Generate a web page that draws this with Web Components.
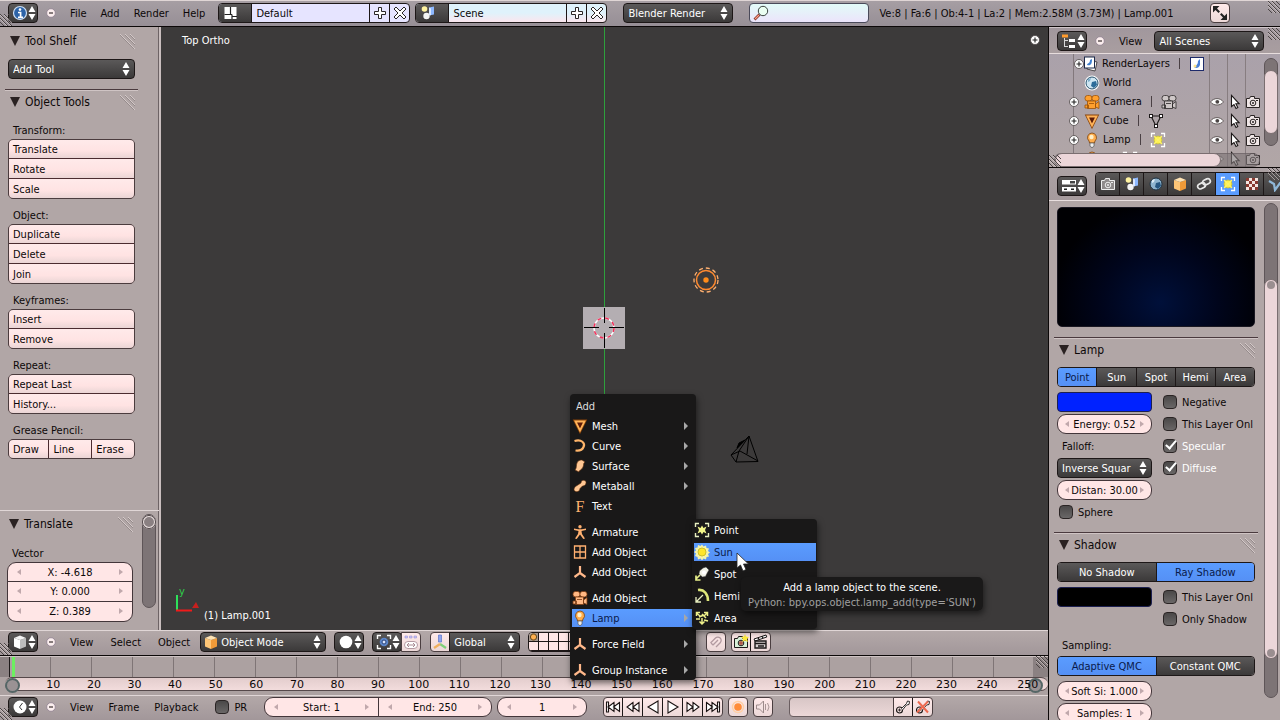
<!DOCTYPE html>
<html lang="en">
<head>
<meta charset="utf-8">
<title>Blender</title>
<style>
html,body{margin:0;height:100%}
body{background:#3b3939;overflow:hidden;font:11px/14px "DejaVu Sans Condensed","Noto Sans",sans-serif;color:#0c0808;
--panel:#b1a6a6;--head:#aba0a0;--pink:#ffe6e6;--dark:linear-gradient(#5b5959,#3b3939);--blue:linear-gradient(#5a9cff,#5590f5);--line:#1d1717}
blender-app{height:100vh}
</style>
</head>
<body>
<blender-app></blender-app>
<script>
const RESET = `*{box-sizing:border-box}
button,input,select{font:inherit;color:inherit;margin:0;padding:0;border:0;background:none;outline:0;border-radius:0;min-width:0}
:host([hidden]){display:none}`;

const define = (name, css, render) => customElements.define(name, class extends HTMLElement {
  connectedCallback() {
    if (this.shadowRoot) return;
    const a = (k, d = '') => this.getAttribute(k) ?? d;
    this.attachShadow({ mode: 'open' }).innerHTML = `<style>${RESET}${css}</style>${render(a, this)}`;
  }
});

const pink = 'fill="#ffc793" stroke="#5a2a08" stroke-width=".6"';
const corners = (c, w = 1.4) => `<path d="M1.5 5V1.5H5M11 1.5h3.500V5M14.500 11v3.500H11M5 14.500H1.500V11" fill="none" stroke="${c}" stroke-width="${w}"/>`;
const empty = c => `<path d="M8 2v7L2.500 13M8 9l5.500 4" fill="none" stroke="${c}" stroke-width="2.200"/>`;
const tri = (x, d) => d > 0 ? `M${x} 3.500l6 4.500-6 4.500z` : `M${x} 3.500l-6 4.500 6 4.500z`;
const play = p => `<path d="${p}" fill="#fff" stroke="#1a1212" stroke-width="1.100"/>`;
const cube = (a, b, c) => `<path d="M2 4l6 2v9l-6-2.500z" fill="${a}"/><path d="M8 6l6-2v8.500L8 15z" fill="${b}"/><path d="M2 4l6-2.500L14 4 8 6z" fill="${c}"/>`;
const movie = (f, s) => `<g fill="${f}" stroke="${s}" stroke-width=".8"><rect x="1" y="1.500" width="7" height="5.500" rx="2.500"/><rect x="8" y="1.500" width="7" height="5.500" rx="2.500"/><path d="M3.500 7h8v7.500h-8zM11.500 10l3.500-2.500v7L11.500 13zM1 11h3.500v3H1z"/></g><path d="M5 9.500h5" stroke="${s}" stroke-width=".8"/>`;
const photo = (f, s) => `<path d="M1.500 4.500h3l1-2h4v2h5v9h-13z" fill="${f}" stroke="${s}"/><circle cx="8" cy="9" r="2.800" fill="none" stroke="${s}"/><circle cx="8" cy="9" r="1" fill="${s}"/><path d="M11 6.500h2" stroke="${s}"/>`;
const ICONS = {
  info: `<circle cx="8" cy="8" r="6.500" fill="#2c63a8" stroke="#cfe0f5" stroke-width="1.200"/><circle cx="8" cy="4.600" r="1.300" fill="#fff"/><path d="M6 7.500h2.600v4.500M6 12.300h5" stroke="#fff" stroke-width="1.700" fill="none"/>`,
  split: `<path d="M1.500 2h12v12h-12z" fill="#fff"/><path d="M7.500 2v7.500M1.500 9.500H9M9 9.500v4.500M9 11.500h5" stroke="#222" stroke-width="1.200" fill="none"/>`,
  scene: `<circle cx="4.500" cy="4" r="2.800" fill="#fff3a0"/><path d="M9 2.500l5-1v8l-5 1z" fill="#8db8ff"/><path d="M9 2.500l2 1v7l-2-1z" fill="#dbe8ff"/><circle cx="6.500" cy="11" r="3.200" fill="#f4f4f4"/>`,
  plus: `<path d="M6.500 2.500h3v4h4v3h-4v4h-3v-4h-4v-3h4z" fill="#fff" stroke="#2a2626"/>`,
  cross: `<path d="M4 2l4 4 4-4 2 2-4 4 4 4-2 2-4-4-4 4-2-2 4-4-4-4z" fill="#fff" stroke="#2a2626"/>`,
  search: `<path d="M1.500 14.500l5-5" stroke="#7a2c20" stroke-width="2.600"/><path d="M2 14l4-4" stroke="#ff9d86" stroke-width="1.200"/><circle cx="10" cy="6" r="4.700" fill="#eafff2" stroke="#3a4440"/>`,
  full: `<path d="M1 1h6.500L5 3.500l3 3L6.500 8l-3-3L1 7.500z" fill="#222"/><path d="M15 15H8.500l2.500-2.500-3-3L9.500 8l3 3L15 8.500z" fill="#222"/>`,
  outliner: `<path d="M1 1.500h6v3H1z" fill="#ff9c2e"/><path d="M3.500 5v9M3.500 7.500H7M3.500 13.500H7" stroke="#d9d9d9" fill="none"/><path d="M8 6h6v3H8zM8 12h6v3H8z" fill="#fff"/>`,
  props: `<path d="M1 2h14v4.500H1zM1 9h14v4.500H1z" fill="#fff"/><path d="M9 3h5v2.500H9z" fill="#444"/><path d="M3 11.200h3M10 11.200h3" stroke="#222" stroke-width="1.600"/>`,
  layers: `<path d="M5 4l9 2-2 9-8-2z" fill="#fff" stroke="#2a2626" stroke-width=".8"/><rect x="1.500" y="1" width="10" height="11" fill="#fff" stroke="#1d2a4a"/><path d="M4 9c0-2 3-1 3-5l2-1c0 5-1 7-5 6z" fill="#3f7fd0"/>`,
  layer: `<rect x="1.500" y="1.500" width="13" height="13" fill="#fff" stroke="#1d2a6a"/><path d="M5 11c1-2 4-1 4-6l2-2v6c-1 3-4 4-6 2z" fill="#4a80d8"/><circle cx="6" cy="10" r="1.500" fill="#ffe48a"/>`,
  world: `<circle cx="8" cy="8" r="7.400" fill="#fff"/><circle cx="8" cy="8" r="6" fill="#cfe6f2" stroke="#27506c"/><path d="M8 7l4-1 1 4-3 3-3-2z" fill="#2d6c99"/><path d="M4 4l3-1-1 3-2 1z" fill="#7fb0cc"/>`,
  worldd: `<circle cx="8" cy="8" r="6" fill="#8fb4ce" stroke="#1d3040"/><path d="M8 7l4-1 1 4-3 3-3-2z" fill="#265680"/><path d="M4 4l3-1-1 3-2 1z" fill="#dcebf5"/>`,
  cam: movie('#ffa02e', '#9a5008'), camdata: movie('#cfc8c8', '#2a2626'), movie: movie('#ffb884', '#7a3a10'),
  mesh: `<path d="M3 3h10L8 13z" fill="none" stroke="#8a4308" stroke-width="2.800"/><path d="M3.500 3.500h9L8 12.500z" fill="#5a1a08" stroke="#ffb45a" stroke-width="1.800"/>`,
  meshdata: `<path d="M3 3h10L8 13z" fill="none" stroke="#1d1919" stroke-width="1.100"/><g fill="#fff" stroke="#1d1919"><rect x="1.500" y="1.500" width="3" height="3"/><rect x="11.500" y="1.500" width="3" height="3"/><rect x="6.500" y="11.500" width="3" height="3"/></g>`,
  bulb: `<path d="M8 1a4.600 4.600 0 0 1 3 8l-.6 2H5.600L5 9a4.600 4.600 0 0 1 3-8z" fill="#ffae4e" stroke="#7a4310" stroke-width=".8"/><circle cx="7.500" cy="5" r="2.200" fill="#fff0c8"/><path d="M6 11h4v3l-1 1.300H7L6 14z" fill="#eee" stroke="#555" stroke-width=".7"/>`,
  lampdata: corners('#fff', 1.300) + `<circle cx="8" cy="8" r="4" fill="#fff04a" stroke="#c9c24a"/><path d="M4 4l8 8M12 4l-8 8" stroke="#fdf26a" stroke-width="1.200"/>`,
  eye: `<path d="M1.500 8c3-4.500 10-4.500 13 0-3 4-10 4-13 0z" fill="#fff" stroke="#5a5252" stroke-width=".9"/><circle cx="8.300" cy="7.800" r="1.900" fill="#4a4444"/>`,
  cursor: `<path d="M4.500 1.500v11l2.500-2 2 4 1.800-1-1.900-3.700h3.300z" fill="#fff" stroke="#1d1919" stroke-width="1.100"/>`,
  photo: photo('#efe6e6', '#2a2424'), photod: photo('#8f8b8b', '#eee'),
  cube: cube('#ffc677', '#f09a38', '#ffe3b4'), cubew: cube('#fff', '#bdbdbd', '#f4f4f4'),
  link: `<g fill="none" stroke="#e8e8e8" stroke-width="1.700"><rect x="1.500" y="7.500" width="8" height="5" rx="2.500" transform="rotate(-25 5 10)"/><rect x="6.500" y="3.500" width="8" height="5" rx="2.500" transform="rotate(-25 10 6)"/></g>`,
  checker: `<rect x="2" y="2" width="12" height="12" fill="#f5e6e2"/><path d="M2 2h3v3H2zM8 2h3v3H8zM5 5h3v3H5zM11 5h3v3h-3zM2 8h3v3H2zM8 8h3v3H8zM5 11h3v3H5zM11 11h3v3h-3z" fill="#8a3a30"/>`,
  physics: `<path d="M1 5l5 3 1 6 5-7 4-3" fill="none" stroke="#8fb8d8" stroke-width="2.200"/>`,
  sphere: `<circle cx="8" cy="8" r="6.300" fill="#fff"/>`,
  pivot: corners('#fff') + `<circle cx="8" cy="8" r="4.300" fill="#5c86c9"/><circle cx="8" cy="8" r="2" fill="#dbe7ff" stroke="#27427a"/>`,
  manip: `<path d="M2 2h2.500v2H2zM6.500 2H9v2H6.500zM11 2h2.500v2H11z" fill="#c9c4f5" stroke="#9a94d8" stroke-width=".6"/><rect x="1.500" y="7.500" width="13" height="7" rx="3.500" fill="#fff" stroke="#b59aa2"/><path d="M4 11h8M6 9l-2 2 2 2M10 9l2 2-2 2" stroke="#a88a92" fill="none"/>`,
  axis: `<path d="M6.500 1h3v7h-3z" fill="#8fa6f0" stroke="#5a72c8" stroke-width=".7"/><path d="M8 10l6 4" stroke="#7fd07a" stroke-width="2.200"/><path d="M8 10l-6 4" stroke="#f0b060" stroke-width="2.200"/>`,
  magnet: `<path d="M2.500 9l5-5a3.300 3.300 0 0 1 4.700 4.700L8 13M5 11l5-5M3 9l2 2" fill="none" stroke="#b29aa0" stroke-width="1.300"/>`,
  shot: photo('#d8f0d8', '#1d1919') + `<circle cx="8" cy="9" r="2" fill="#b05a4a"/><path d="M12 0l1 2.500 3 .5-2 2 1 3-3-1.500L9.500 8l.5-3-2-2 3-.5z" fill="#ffec40"/>`,
  clap: `<path d="M1 5l12-4 .8 2L2 7z" fill="#fff" stroke="#1d1919"/><path d="M2 7h11v7H2z" fill="#d8d0d0" stroke="#1d1919" stroke-width="1.400"/><path d="M2 9.500h11M5 3.800l1 1.500M9 2.400l1 1.500M5 12h6" stroke="#1d1919" stroke-width="1.300"/>`,
  clock: `<circle cx="8" cy="8" r="6.500" fill="#fff"/><path d="M10.500 4L7.500 8l2.500 3" fill="none" stroke="#333"/>`,
  first: play('M1.500 3h2v10h-2z' + tri(9, -1) + tri(14.500, -1)), prev: play(tri(8, -1) + tri(14, -1)),
  back: play('M13 2L3 8l10 6z'), fwd: play('M3 2l10 6-10 6z'),
  next: play(tri(2, 1) + tri(8, 1)), last: play(tri(1.500, 1) + tri(7, 1) + 'M12.500 3h2v10h-2z'),
  rec: `<circle cx="8" cy="8" r="5.500" fill="none" stroke="#ffcfa5" stroke-width="1.400"/><circle cx="8" cy="8" r="3.800" fill="#ff8c3a"/>`,
  sound: `<path d="M1.500 6h3l4-4v12l-4-4h-3z" fill="#f5e3e3" stroke="#9c8a8a"/><path d="M10.500 5v6M12.500 4q3 4 0 8" stroke="#a89696" fill="none"/>`,
  key: `<circle cx="4.500" cy="11" r="3" fill="none" stroke="#1d1919" stroke-width="1.200"/><path d="M4.500 9.500v3M3 11h3" stroke="#1d1919" stroke-width=".8"/><path d="M6.500 9.500l5-5 1-2.500 2 .5-.5 3-2.500.5-4 5" fill="#fff" stroke="#1d1919" stroke-width=".9"/>`,
  minus: `<circle cx="8" cy="8" r="4.300" fill="#fbeeee" stroke="#8f8090" stroke-width=".8"/><path d="M6 8h4" stroke="#3a3030" stroke-width="1.200"/>`,
  expand: `<circle cx="8" cy="8" r="4.500" fill="#fff" stroke="#4a4444" stroke-width=".8"/><path d="M5.500 8h5M8 5.500v5" stroke="#222" stroke-width="1.100"/>`,
  curve: `<path d="M2.500 3c7-2 11 2 9 6-1 2.500-4 4-8 3.500" fill="none" stroke="#ffb56a" stroke-width="2.200"/>`,
  surf: `<path d="M5 5c1-3 4-3 5-3l3 2c-2 1-1 3-2 5-1 3-4 3-4 5l-4-2c2-2 1-5 2-7z" ${pink}/>`,
  meta: `<path d="M3.500 8.500L9 5c0-4 6-3 5 0 0 2-2 3-3.500 3L8 10.500c0 4-6 4-6 1 0-1 .5-2 1.500-3z" ${pink}/>`,
  text: `<text x="8" y="13.500" text-anchor="middle" font-family="Liberation Serif" font-size="16" fill="#ffb070">F</text>`,
  arm: `<circle cx="8" cy="2.800" r="1.700" fill="#ffb070"/><path d="M2 4.500c3 1 9 1 12 0v1.500l-4.500 1 .5 3 3 4.500-1.700.5L8 10.500l-3.300 4.500-1.700-.5 3-4.500.5-3L2 6z" fill="#ffb070"/>`,
  lattice: `<path d="M2.500 2h11v12h-11zM8 2v12M2.500 8h11" fill="none" stroke="#ffb070" stroke-width="1.300"/>`,
  empty: empty('#ffb88a'),
  point: corners('#e8efc0') + `<path d="M8 3.500l1.500 2.500 3-1.500L11 8l1.500 3.500-3-1.500L8 12.500 6.500 10l-3 1.500L5 8 3.500 4.500l3 1.500z" fill="#f4f78a"/>`,
  sun: `<path d="M8 .5l1.500 2 2.500-1 .5 2.500 2.500.5-1 2.500 2 1.500-2 1.500 1 2.500-2.500.5-.5 2.500-2.500-1-1.500 2-1.500-2-2.500 1-.5-2.500L1 12l1-2.500L0 8l2-1.500L1 4l2.500-.5L4 1l2.500 1z" fill="#f5f3a8"/><circle cx="8" cy="8" r="4" fill="#ffe62a" stroke="#cdbf2a"/>`,
  spot: `<path d="M9 2l3-1 3 3-1.500 2.500-2 4-3 .5-3.500-3 .5-3z" fill="#f0f0e6" stroke="#333" stroke-width=".5"/><circle cx="10" cy="6.500" r="2" fill="#fff"/><path d="M6 9l-4 4M2 9.500v4.500h4.500" stroke="#e8ef8a" fill="none" stroke-width="1.700"/>`,
  hemi: `<path d="M4 2c6-1 10 4 10 11" fill="none" stroke="#dfe87a" stroke-width="2.600"/><path d="M9 7l-6.500 6.500M2 9v5h5" fill="none" stroke="#e8efc0" stroke-width="1.300"/>`,
  area: `<path d="M8 4l4 4M6 6L2.500 3M2.500 6V2.500H6M10 6l3-3M10 2.500h3.500V6M8 8v6M5.500 11.500L8 14l2.500-2.500M2 9h4M10 10l4 1M5 7l5-2" fill="none" stroke="#eef08a" stroke-width="1.500"/>`
};
ICONS.keydel = ICONS.key + '<path d="M3 2.500l10 11M13 2.500l-11 11" stroke="#ee6a50" stroke-width="2"/>';

define('bl-icon', `:host{display:block;width:16px;height:16px;flex:none}svg{display:block;width:100%;height:100%}`,
  a => `<svg viewBox="0 0 16 16" aria-hidden="true">${ICONS[a('name')] || ''}</svg>`);

define('bl-arrows', `:host{display:block;width:8px;height:14px;flex:none;pointer-events:none}svg{display:block}`,
  () => `<svg width="8" height="14"><path d="M4 0l3.500 6h-7zM4 14l3.500-6h-7z" fill="#fff"/></svg>`);

define('bl-grip', `:host{display:block;width:16px;height:16px;flex:none}svg{display:block}`,
  () => `<svg width="16" height="16"><path d="M1 1l15 15M6 1l10 10M11 1l5 5" stroke="#d3c8c8"/><path d="M1 2l14 14M6 2l10 10M11 2l5 5" stroke="#958b8b"/></svg>`);

define('bl-corner', `:host{display:block;position:absolute;width:12px;height:12px}:host([bottom]){left:0;bottom:0}:host(:not([bottom])){right:0;top:0}svg{display:block}`,
  () => `<svg width="12" height="12"><path d="M0 0l12 12M4 0l8 8M8 0l4 4M0 4l8 8M0 8l4 4" stroke="#4a4444"/><path d="M0 1l11 11M4 1l8 8M0 5l7 7" stroke="#ddd2d2" stroke-width=".6"/></svg>`);

define('bl-bar', `:host{display:flex;position:relative;flex:none;height:26px;padding:1px 8px 0;align-items:flex-start;background:linear-gradient(#b3a8a8,#a2979a);border-top:1px solid #e0d6d6;border-bottom:1px solid #0c0808}
:host([top]){height:27px;padding-top:2px;background:linear-gradient(#a69ea3,#978f96)}:host([last]){height:25px;border-bottom:0}:host([side]){height:27px;padding-top:3px;background:linear-gradient(#a1979d,#a99ea0);border-bottom-color:#e8dede;border-top-color:#d0c6ca}`,
  () => `<slot></slot>`);

define('bl-type', `:host{display:block;flex:none;width:30px;height:20px}
button{width:100%;height:100%;display:flex;align-items:center;justify-content:space-between;padding:0 3px;background:var(--dark);border:1px solid var(--line);border-radius:4px}`,
  a => `<button type="button" aria-label="${a('label')}"><bl-icon name="${a('icon')}"></bl-icon><bl-arrows></bl-arrows></button>`);

define('bl-menus', `:host{display:flex;height:20px;align-items:center;gap:15px}:host([tight]){gap:14px}:host([wide]){gap:17px}bl-icon{margin-left:5px;margin-right:-4px}:host([tight]) bl-icon{margin-right:-3px}:host([wide]) bl-icon{margin-right:-6px}button{height:20px;padding-top:2px}`,
  a => `<bl-icon name="minus"></bl-icon>` + a('items').split('|').map(t => t && `<button type="button">${t}</button>`).join(''));

define('bl-select', `:host{display:block;position:relative;height:20px;flex:none}
select{appearance:none;width:100%;height:100%;padding:1px 16px 0 4px;color:#fff;background:var(--dark);border:1px solid var(--line);border-radius:4px;text-overflow:clip}
:host([icon]) select{padding-left:20px}:host([joined]) select{border-radius:0 4px 4px 0}
bl-icon{position:absolute;left:3px;top:2px}bl-arrows{position:absolute;right:5px;top:3px}`,
  a => `<select aria-label="${a('label')}"><option>${a('value')}</option></select>${a('icon') ? `<bl-icon name="${a('icon')}"></bl-icon>` : ''}<bl-arrows></bl-arrows>`);

define('bl-datablock', `:host{display:flex;width:192px;height:20px;border:1px solid var(--line);border-radius:4px;overflow:hidden;background:#e6e4ff}
:host([icon=scene]){background:linear-gradient(#dff2fb 50%,#fbe6ee)}
button{width:20px;display:flex;align-items:center;justify-content:center;border-left:1px solid var(--line)}
.t{width:32px;border:0;background:var(--dark);justify-content:flex-start;padding-left:4px}
input{flex:1;padding:1px 4px 0;border-left:1px solid var(--line)}`,
  a => `<button class="t" type="button" aria-label="Browse"><bl-icon name="${a('icon')}"></bl-icon></button><input aria-label="${a('label')}" value="${a('value')}"><button type="button" aria-label="Add"><bl-icon name="plus"></bl-icon></button><button type="button" aria-label="Remove"><bl-icon name="cross"></bl-icon></button>`);

define('bl-iconrow', `:host{display:flex;height:20px;flex:none;border:1px solid #4a3e40;border-radius:4px;overflow:hidden;background:linear-gradient(#ffeaea,#ecd8d8)}
button{width:18px;display:flex;align-items:center;justify-content:center}button+button{width:20px;border-left:1px solid var(--line)}`,
  a => a('icons').split(' ').map(n => `<button type="button" aria-label="${n}"><bl-icon name="${n}"></bl-icon></button>`).join(''));

define('bl-title', `:host{display:flex;height:20px;align-items:center;font-size:12px;padding:0 0 0 2px}
:host([sep]){margin:10px -3px 0;padding:1px 3px 0 5px;height:23px;border-top:1px solid #4a3a3e;box-shadow:inset 0 1px #cfc4c4}
svg{margin-right:5px;flex:none}span{flex:1}`,
  () => `<svg width="10" height="10"><path d="M0 0h10L5 10z" fill="#2a2222"/></svg><span><slot></slot></span><bl-grip></bl-grip>`);

define('bl-label', `:host{display:block;height:25px;padding:8px 5px 0;line-height:17px}`, () => `<slot></slot>`);

define('bl-ops', `:host{display:flex;flex-direction:column;border:1px solid #4b3c3e;border-radius:5px;overflow:hidden;background:#4b2c30}
button{height:20px;padding:2px 4px 0;text-align:left;border-top:1px solid #4b2c30;background:linear-gradient(#ffeaea,#ffe3e3 60%,#ead5d5)}
button:first-of-type{height:18px;border-top:0}:host([row]){flex-direction:row}:host([row]) button{flex:40;height:18px;border:0}
:host([row]) button+button{border-left:1px solid #4b2c30;flex:43}`,
  a => a('items').split('|').map(t => `<button type="button">${t}</button>`).join(''));

define('bl-nums', `:host{display:flex;flex-direction:column;border:1px solid #43363a;border-radius:9px;overflow:hidden;background:var(--pink)}
label{display:flex;position:relative;height:20px;border-top:1px solid #43363a}label:first-of-type{height:18px;border:0}
input{flex:1;text-align:center;width:100%;padding-top:1px}svg{position:absolute;top:6px;left:9px}svg+svg{left:auto;right:9px;transform:scaleX(-1)}
:host([tight]) svg{left:7px}:host([tight]) svg+svg{left:auto;right:7px}
:host([row]){flex-direction:row}:host([row]) label{flex:1;height:18px}:host([row]) label+label{border:0;border-left:1px solid #43363a}`,
  a => a('values').split('|').map(v => `<label><input aria-label="${v.split(':')[0]}" value="${v}"><svg width="4" height="6"><path d="M4 0v6L0 3z" fill="#c0a8ac"/></svg><svg width="4" height="6"><path d="M4 0v6L0 3z" fill="#c0a8ac"/></svg></label>`).join(''));

define('bl-check', `:host{display:flex;height:20px;align-items:center;white-space:nowrap}
label{display:flex;align-items:center}span{padding-top:2px}input{appearance:none;position:relative;width:14px;height:14px;margin:0 5px 0 2px;flex:none;background:linear-gradient(#4a4848,#6a6767);border:1px solid #2a2424;border-radius:4px}
input:checked::after{content:"";position:absolute;left:4px;top:-2px;width:4px;height:9px;border:solid #fff;border-width:0 2px 2px 0;transform:rotate(40deg)}
:host([checked]){color:#fff}`,
  a => `<label><input type="checkbox" ${a('checked', null) !== null ? 'checked' : ''}><span><slot></slot></span></label>`);

define('bl-seg', `:host{display:flex;height:20px;border:1px solid var(--line);border-radius:4px;overflow:hidden}
button{flex:1;color:#fff;background:var(--dark);padding-top:2px}button+button{border-left:1px solid var(--line)}button[aria-pressed=true]{color:#0a1a4a;background:var(--blue)}`,
  a => a('items').split('|').map((t, i) => `<button type="button" aria-pressed="${i == a('on')}">${t}</button>`).join(''));

define('bl-swatch', `:host{display:block;height:20px}button{display:block;width:100%;height:20px;border:1px solid #1d2050;border-radius:4px;background:var(--c)}`,
  a => `<button type="button" aria-label="${a('label')}" style="--c:${a('color')}"></button>`);

define('bl-scroll', `:host{display:flex;flex-direction:column;width:14px;border-radius:7px;background:#7d7476;border:1px solid #5e5558}
i{display:block;border-radius:7px;background:#ecd6d9;border:1px solid #7a6e70;margin:0 -1px;flex:none;position:relative}
.k{height:14px;border:2px solid #efe4e4;outline:1px solid #4d4446;outline-offset:-1px;background:#8a8082}
:host([row]){flex-direction:row;width:auto;height:14px}:host([row]) i{margin:-1px 0}
:host([caps]) i::before,:host([caps]) i::after{content:"";position:absolute;left:2px;top:1px;width:8px;height:8px;border-radius:50%;background:#9a8e90}:host([caps]) i::after{top:auto;bottom:1px}`,
  a => a('knob', null) !== null ? `<i class="k"></i>` : `<i style="${a('thumb')}"></i>`);

define('bl-shelf', `:host{display:flex;flex-direction:column;width:161px;flex:none;background:var(--panel);border-right:2px solid #c9bebe;box-shadow:inset -1px 0 #6d6365}
.main{flex:1;padding:4px 24px 0 8px;min-height:0;overflow:hidden}.main>bl-select{margin-top:8px}.main>bl-label:first-of-type{margin-top:2px}
.op{height:120px;flex:none;border-top:1px solid #e0d6d6;display:flex;padding:3px 3px 0 7px}.form{width:127px;margin-right:9px}
.form bl-label{margin-top:3px}bl-scroll{height:94px}`,
  () => `<div class="main"><bl-title>Tool Shelf</bl-title><bl-select label="Add Tool" value="Add Tool"></bl-select>
<bl-title sep>Object Tools</bl-title><bl-label>Transform:</bl-label><bl-ops items="Translate|Rotate|Scale"></bl-ops>
<bl-label>Object:</bl-label><bl-ops items="Duplicate|Delete|Join"></bl-ops><bl-label>Keyframes:</bl-label><bl-ops items="Insert|Remove"></bl-ops>
<bl-label>Repeat:</bl-label><bl-ops items="Repeat Last|History..."></bl-ops><bl-label>Grease Pencil:</bl-label><bl-ops row items="Draw|Line|Erase"></bl-ops></div>
<div class="op"><div class="form"><bl-title>Translate</bl-title><bl-label>Vector</bl-label><bl-nums values="X: -4.618|Y: 0.000|Z: 0.389"></bl-nums></div><bl-scroll knob></bl-scroll></div>`);

define('bl-viewport', `:host{display:block;position:relative;flex:1;background:#3c3a3a;color:#fff;overflow:hidden}
.y{position:absolute;left:50%;top:0;bottom:0;width:1px;margin-left:-1px;background:#2ea03c}
.scene{position:absolute;left:50%;top:50%;width:400px;height:400px;margin:-201px 0 0 -201px}
.name,.obj,.axis,.more{position:absolute}.name{left:21px;top:7px}.obj{left:43px;bottom:7px}.axis{left:12px;bottom:12px}.more{right:5px;top:5px}`,
  () => `<div class="y"></div><svg class="scene" viewBox="0 0 400 400">
<rect x="179" y="179" width="42" height="42" fill="#b4aeb2"/><circle cx="200" cy="200" r="10" fill="none" stroke="#fff" stroke-width="1.500"/><circle cx="200" cy="200" r="10" fill="none" stroke="#f0305a" stroke-width="1.500" stroke-dasharray="4 4"/>
<path d="M180 199.500h15M205 199.500h15M200.500 180v15M200.500 205v15" stroke="#000"/>
<g fill="none" transform="translate(302 152)"><circle r="9.500" stroke="#ff8a30" stroke-width="1.500"/><circle r="12" stroke="#ffb070" stroke-width="1.300" stroke-dasharray="4 3"/></g><circle cx="302" cy="152" r="2.700" fill="#ff8c1a"/>
<g fill="none" stroke="#000"><path d="M327 327l18-19 9 25.500-22 .5z M327 327l9-4 18 10M345 308l-10 15-3 11M345 308l-2 18"/><path d="M333 320l2-5 6-3z" fill="#000"/></g></svg>
<span class="name">Top Ortho</span><bl-icon class="more" name="expand"></bl-icon>
<svg class="axis" width="32" height="32"><path d="M4 9v16" stroke="#2ee05a" stroke-width="2"/><path d="M3 24.500h16" stroke="#f01a1a" stroke-width="2"/><text x="6" y="9" font-size="11" fill="#2ed04a">y</text><path d="M19 22l4-6 3 6z" fill="#c8201e"/></svg>
<span class="obj">(1) Lamp.001</span>`);

define('bl-layers', `:host{display:grid;grid-template:repeat(2,1fr)/repeat(5,10px);width:50px;height:20px;gap:0;border:1px solid var(--line);border-radius:4px;background:#ffe6e6;overflow:hidden}
button{border-right:1px solid var(--line);border-bottom:1px solid var(--line)}button:first-of-type{background:radial-gradient(circle,#ffb050 2px,#6a4a1a 3px,#a89a90 4px)}`,
  () => Array(10).fill(`<button type="button" aria-label="Layer"></button>`).join(''));

define('bl-view-header', `:host{display:block}bl-bar>*{flex:none}.mode{width:126px;margin-left:10px}.gap{margin-left:8px}.piv{display:flex}bl-iconrow{margin:0}.piv bl-iconrow{margin-left:-1px;border-radius:0 4px 4px 0}
.ori{display:flex;margin-left:9px}.ori bl-iconrow{border-radius:4px 0 0 4px}.ori bl-select{width:71px;margin-left:-1px}bl-layers{margin:0 128px 0 8px}bl-iconrow+bl-iconrow{margin-left:5px}`,
  () => `<bl-bar><bl-type icon="cubew" label="Editor type"></bl-type><bl-menus wide items="View|Select|Object"></bl-menus>
<bl-select class="mode" icon="cube" label="Mode" value="Object Mode"></bl-select><bl-type class="gap" icon="sphere" label="Shading"></bl-type>
<div class="piv"><bl-type class="gap" icon="pivot" label="Pivot"></bl-type><bl-iconrow icons="manip"></bl-iconrow></div>
<div class="ori"><bl-iconrow icons="axis"></bl-iconrow><bl-select joined label="Orientation" value="Global"></bl-select></div>
<bl-layers></bl-layers><bl-iconrow icons="magnet"></bl-iconrow><bl-iconrow icons="shot clap"></bl-iconrow><bl-corner bottom></bl-corner></bl-bar>`);

define('bl-timeline', `:host{display:flex;flex-direction:column;position:relative;height:39px;background:#aca1a1}
.track{height:21px;border-top:1px solid #cfc4c4;background:linear-gradient(90deg,#8b8182 9px,#1d1919 9px 10px,transparent 10px calc(100% - 15px),#8b8182 0),repeating-linear-gradient(90deg,#7f7576 0 1px,transparent 1px 41px) 9px 0;position:relative}
.now{position:absolute;left:12px;top:0;bottom:0;width:3px;background:#6cf060}
ol{list-style:none;margin:0 0 0 5px;padding:0 0 0 28px;height:14px;display:grid;grid-template-columns:repeat(25,1fr);border:1px solid #55484a;border-width:1px 0;border-radius:7px;background:linear-gradient(#e3cdcd,#f2dcdc);position:relative;line-height:13px;font-family:"DejaVu Sans",sans-serif}
li{min-width:0;white-space:nowrap;display:flex;justify-content:center;position:relative;z-index:1}
ol::before,ol::after{content:"";position:absolute;top:0;width:11px;height:11px;border-radius:50%;left:0;background:#9a9294;border:2px solid #566}ol::after{left:auto;right:5px}`,
  () => `<div class="track"><div class="now"></div></div><ol>${Array.from({ length: 25 }, (_, i) => `<li>${(i + 1) * 10}</li>`).join('')}</ol><bl-corner></bl-corner>`);

define('bl-time-header', `:host{display:block}bl-bar>*{flex:none}bl-check{margin-left:15px}.range{width:228px;margin-left:17px}.cur{width:90px;margin:0 16px 0 5px}bl-iconrow+bl-iconrow{margin-left:5px}
.keys{display:flex;margin-left:16px}.keys input{width:105px;height:20px;border:1px solid #6a5e60;border-radius:4px 0 0 4px;background:linear-gradient(#d8c6c6,#ecd8d8)}.keys bl-iconrow{border-radius:0 4px 4px 0;margin-left:-1px}`,
  () => `<bl-bar last><bl-type icon="clock" label="Editor type"></bl-type><bl-menus items="View|Frame|Playback"></bl-menus><bl-check>PR</bl-check>
<bl-nums class="range" row values="Start: 1|End: 250"></bl-nums><bl-nums class="cur" values="1"></bl-nums>
<bl-iconrow icons="first prev back fwd next last"></bl-iconrow><bl-iconrow icons="rec"></bl-iconrow><bl-iconrow icons="sound"></bl-iconrow>
<div class="keys"><input aria-label="Keying set"><bl-iconrow icons="key keydel"></bl-iconrow></div><bl-corner bottom></bl-corner></bl-bar>`);

define('bl-node', `:host{display:flex;height:19px;align-items:center;padding-left:17px;flex:none}
:host([child]){padding-left:22px}.x{width:16px;margin-right:2px}:host([child]) .x{margin-right:-4px}
.name{margin-left:3px}.bar{width:1px;height:11px;background:#4a4044;margin:0 9px}.flags{margin-left:auto;display:flex;gap:2px}`,
  a => `${a('plain', null) !== null ? '<span class="x"></span>' : '<bl-icon class="x" name="expand"></bl-icon>'}<bl-icon name="${a('icon')}"></bl-icon><span class="name"><slot></slot></span>${a('data') ? `<span class="bar"></span><bl-icon name="${a('data')}"></bl-icon>` : ''}${a('flags', null) !== null ? '<span class="flags"><bl-icon name="eye"></bl-icon><bl-icon name="cursor"></bl-icon><bl-icon name="photo"></bl-icon></span>' : ''}`);

define('bl-outliner', `:host{display:block;position:relative}bl-bar bl-select{width:110px;margin-left:12px}
.tree{height:114px;position:relative;display:flex;overflow:hidden;background:linear-gradient(#aaa1aa,#b1a6a6);border-bottom:1px solid #0c0808}
.rows{flex:1;padding-right:3px;background:linear-gradient(90deg,transparent 24px,#82787c 24px 25px,transparent 25px calc(100% - 55px),#877d80 0 calc(100% - 54px),transparent 0 calc(100% - 37px),#877d80 0 calc(100% - 36px),transparent 0 calc(100% - 19px),#877d80 0 calc(100% - 18px),transparent 0)}
.v{margin:4px 2px 0 0;height:88px;padding-top:11px}.h{position:absolute;left:5px;right:20px;bottom:0;background:#7d7476a0;border-color:#5e555880}`,
  () => `<bl-bar side><bl-type icon="outliner" label="Editor type"></bl-type><bl-menus tight items="View"></bl-menus><bl-select label="Display" value="All Scenes"></bl-select><bl-corner></bl-corner></bl-bar>
<div class="tree"><div class="rows"><bl-node child icon="layers" data="layer">RenderLayers</bl-node><bl-node plain icon="world">World</bl-node><bl-node flags icon="cam" data="camdata">Camera</bl-node><bl-node flags icon="mesh" data="meshdata">Cube</bl-node><bl-node flags icon="bulb" data="lampdata">Lamp</bl-node><bl-node flags icon="bulb" data="lampdata"></bl-node></div>
<bl-scroll class="v" thumb="height:64px"></bl-scroll><bl-scroll row class="h" thumb="width:166px"></bl-scroll><bl-corner bottom></bl-corner></div>`);

define('bl-properties', `:host{display:flex;flex-direction:column;flex:1;min-height:0;background:var(--panel)}
.head{height:33px;flex:none;display:flex;padding:4px 0 0 8px;border-bottom:1px solid #e8dede;overflow:hidden;position:relative;background:linear-gradient(#aca2a4,#a59a9c)}bl-type{margin:4px 8px 0 0}
nav{display:flex;height:24px;flex:none;border:1px solid var(--line);border-radius:4px 0 0 4px;overflow:hidden}
nav button{width:24px;display:flex;align-items:center;justify-content:center;background:var(--dark);border-right:1px solid var(--line)}nav button[aria-current]{background:#5a9cff}
.body{flex:1;display:flex;min-height:0;overflow:hidden;padding:2px 2px 0 8px}.main{flex:1;padding:4px 9px 0 0;min-width:0}
.prev{height:120px;border-radius:5px;border:1px solid #1a1822;background:radial-gradient(ellipse at 52% 80%,#00103a,#00051c 40%,#000003 75%)}
bl-seg{margin:7px 0 5px}.cols{display:grid;grid-template-columns:95px 1fr;column-gap:9px}.col{display:flex;flex-direction:column;gap:2px;min-width:0}
.lab{height:20px;line-height:22px;padding-left:5px}.samp{margin-top:6px}.samp+bl-seg{margin-top:1px}bl-scroll{height:495px;padding-top:75px}`,
  () => `<div class="head"><bl-type icon="props" label="Editor type"></bl-type><nav>${['photod', 'scene', 'worldd', 'cube', 'link', 'lampdata', 'checker', 'physics'].map(n => `<button type="button" aria-label="${n}" ${n == 'lampdata' ? 'aria-current="true"' : ''}><bl-icon name="${n}"></bl-icon></button>`).join('')}</nav><bl-corner></bl-corner></div>
<div class="body"><div class="main"><div class="prev"></div><bl-title sep>Lamp</bl-title><bl-seg on="0" items="Point|Sun|Spot|Hemi|Area"></bl-seg>
<div class="cols"><div class="col"><bl-swatch label="Colour" color="#0022ff"></bl-swatch><bl-nums tight values="Energy: 0.52"></bl-nums><div class="lab">Falloff:</div><bl-select label="Falloff" value="Inverse Squar"></bl-select><bl-nums tight values="Distan: 30.00"></bl-nums><bl-check>Sphere</bl-check></div>
<div class="col"><bl-check>Negative</bl-check><bl-check>This Layer Onl</bl-check><bl-check checked>Specular</bl-check><bl-check checked>Diffuse</bl-check></div></div>
<bl-title sep>Shadow</bl-title><bl-seg on="1" items="No Shadow|Ray Shadow"></bl-seg>
<div class="cols"><div class="col"><bl-swatch label="Shadow colour" color="#000"></bl-swatch></div><div class="col"><bl-check>This Layer Onl</bl-check><bl-check>Only Shadow</bl-check></div></div>
<div class="lab samp">Sampling:</div><bl-seg on="0" items="Adaptive QMC|Constant QMC"></bl-seg>
<div class="cols"><div class="col"><bl-nums tight values="Soft Si: 1.000"></bl-nums><bl-nums tight values="Samples: 1"></bl-nums></div></div></div><bl-scroll caps thumb="height:380px"></bl-scroll></div>`);

define('bl-item', `:host{display:block}button{display:flex;align-items:center;width:100%;height:18px;margin:1px 0;padding:0 5px 0 0;color:#fff;text-align:left}
span{flex:1;margin-left:4px;padding-top:1px;white-space:nowrap}:host([on]) button{background:var(--blue);color:#0a1a4a}:host([gap]){margin-top:6px}`,
  a => `<button type="button" role="menuitem"><bl-icon name="${a('icon')}"></bl-icon><span><slot></slot></span>${a('sub', null) !== null ? '<svg width="5" height="8"><path d="M0 0l4 4-4 4z" fill="#a8a8a8"/></svg>' : ''}</button>`);

define('bl-menu', `:host{display:flex;flex-direction:column;position:absolute;background:#191818;border-radius:4px;padding:2px 2px 0;box-shadow:1px 3px 6px #0008;color:#fff}
.t{height:20px;line-height:21px;padding-left:4px;color:#ddd}`,
  a => (a('title') ? `<div class="t">${a('title')}</div>` : '') + `<slot></slot>`);

define('bl-tip', `:host{display:block;position:absolute;padding:3px 0 0;height:34px;text-align:center;background:#191818f5;border-radius:5px;color:#fff;box-shadow:1px 3px 6px #0008;white-space:nowrap}p{margin:0;line-height:15px}p+p{color:#a0a0a0}`,
  () => `<p><slot></slot></p><p><slot name="py"></slot></p>`);

define('blender-app', `:host{display:flex;flex-direction:column}
bl-bar>*{flex:none}bl-datablock{margin-left:13px}bl-datablock+bl-datablock{margin-left:5px}.eng{width:110px;margin-left:16px}
.find{width:120px;height:20px;margin-left:16px;display:flex;align-items:center;padding-left:3px;border:1px solid #4a4a5a;border-radius:4px;background:linear-gradient(#e2fbf8,#ece4fb)}.find input{flex:1}
.stats{line-height:22px;margin-left:10px;white-space:nowrap}.full{margin-left:auto;margin-right:42px}
main{flex:1;display:grid;grid-template-columns:minmax(0,1fr) 232px;min-height:0}
.left{display:flex;flex-direction:column;position:relative;min-width:0}.work{flex:1;display:flex;min-height:0}
.right{border-left:1px solid #0c0808;display:flex;flex-direction:column;min-width:0;min-height:0}
.add{left:570px;top:367px;width:126px}.lamp{left:692px;top:492px;width:125px;gap:2px;padding:1px 1px 1px 2px}
bl-tip{left:741px;top:550px;width:242px}.ptr{position:absolute;left:736px;top:525px}`,
  () => `<bl-bar top><bl-type icon="info" label="Editor type"></bl-type><bl-menus tight items="File|Add|Render|Help"></bl-menus>
<bl-datablock icon="split" label="Screen" value="Default"></bl-datablock><bl-datablock icon="scene" label="Scene" value="Scene"></bl-datablock>
<bl-select class="eng" label="Engine" value="Blender Render"></bl-select><div class="find"><bl-icon name="search"></bl-icon><input aria-label="Search"></div>
<span class="stats">Ve:8 | Fa:6 | Ob:4-1 | La:2 | Mem:2.58M (3.73M) | Lamp.001</span><bl-iconrow class="full" icons="full"></bl-iconrow><bl-corner></bl-corner><bl-corner bottom></bl-corner></bl-bar>
<main><div class="left"><div class="work"><bl-shelf></bl-shelf><bl-viewport></bl-viewport></div><bl-view-header></bl-view-header><bl-timeline></bl-timeline><bl-time-header></bl-time-header>
<bl-menu class="add" title="Add"><bl-item icon="mesh" sub>Mesh</bl-item><bl-item icon="curve" sub>Curve</bl-item><bl-item icon="surf" sub>Surface</bl-item><bl-item icon="meta" sub>Metaball</bl-item><bl-item icon="text">Text</bl-item>
<bl-item gap icon="arm">Armature</bl-item><bl-item icon="lattice">Add Object</bl-item><bl-item icon="empty">Add Object</bl-item><bl-item gap icon="movie">Add Object</bl-item><bl-item icon="bulb" on sub>Lamp</bl-item><bl-item gap icon="empty" sub>Force Field</bl-item><bl-item gap icon="empty" sub>Group Instance</bl-item></bl-menu>
<bl-menu class="lamp"><bl-item icon="point">Point</bl-item><bl-item icon="sun" on>Sun</bl-item><bl-item icon="spot">Spot</bl-item><bl-item icon="hemi">Hemi</bl-item><bl-item icon="area">Area</bl-item></bl-menu>
<bl-tip>Add a lamp object to the scene.<span slot="py">Python: bpy.ops.object.lamp_add(type='SUN')</span></bl-tip>
<svg class="ptr" width="14" height="20"><path d="M1 1v15l3.500-3 2.500 6 3-1.500-2.500-5.500h5z" fill="#fff" stroke="#222" stroke-width=".8"/></svg></div>
<div class="right"><bl-outliner></bl-outliner><bl-properties></bl-properties></div></main>`);
</script>
</body>
</html>
